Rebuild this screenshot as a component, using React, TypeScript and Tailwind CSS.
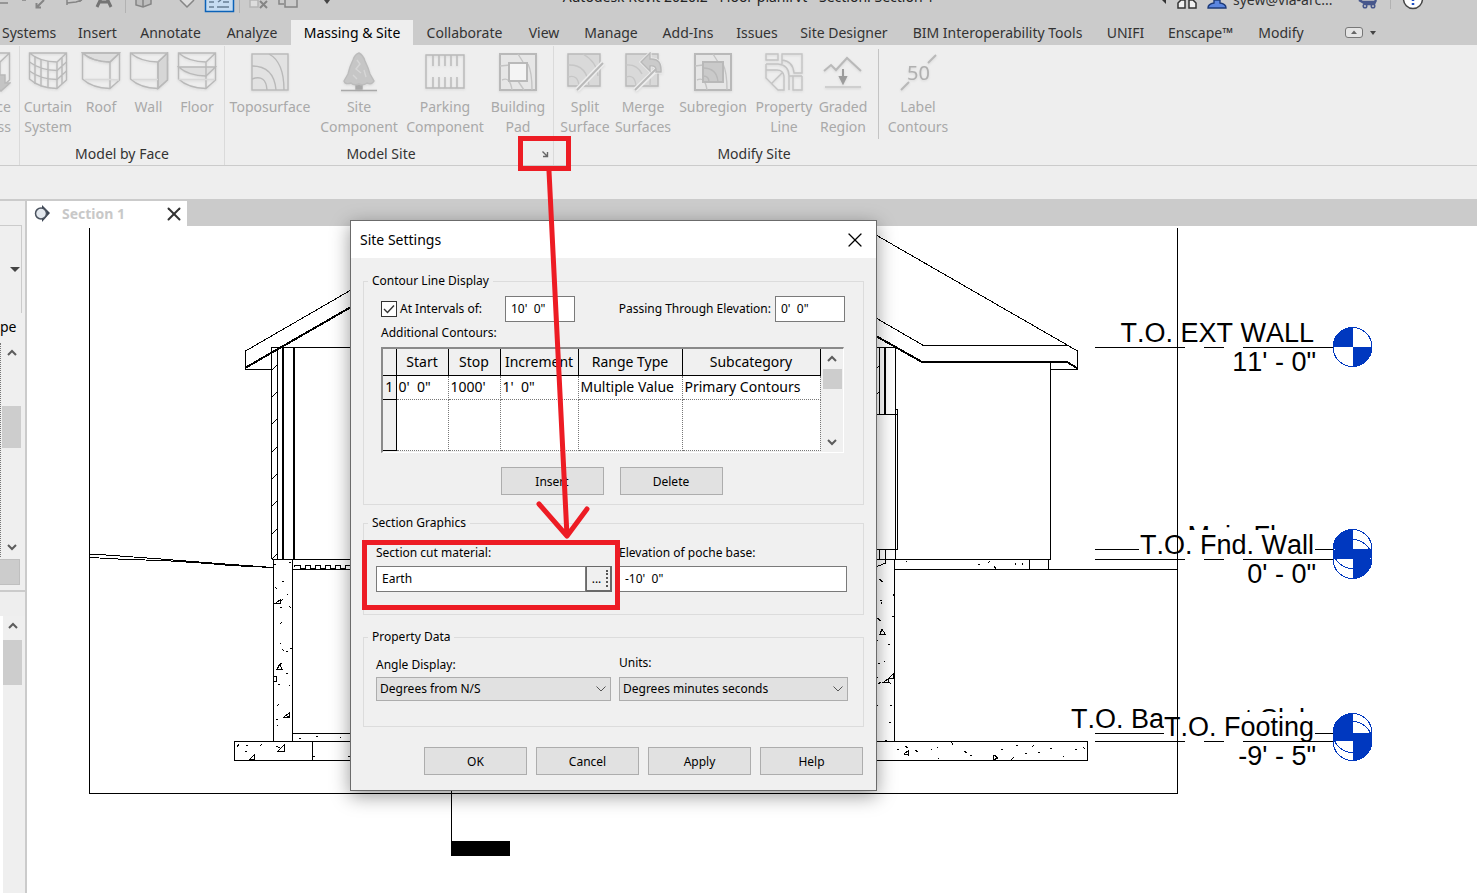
import type { ReactNode } from "react"
import { X } from "lucide-react"

const tabs = [
  { label: "Insert", width: "w-[61px]" },
  { label: "Annotate", width: "w-[85px]" },
  { label: "Analyze", width: "w-[78px]" },
  { label: "Massing & Site", width: "w-[122px]", active: true },
  { label: "Collaborate", width: "w-[103px]" },
  { label: "View", width: "w-[56px]" },
  { label: "Manage", width: "w-[78px]" },
  { label: "Add-Ins", width: "w-[76px]" },
  { label: "Issues", width: "w-[62px]" },
  { label: "Site Designer", width: "w-[112px]" },
  { label: "BIM Interoperability Tools", width: "w-[195px]" },
  { label: "UNIFI", width: "w-[61px]" },
  { label: "Enscape™", width: "w-[89px]" },
  { label: "Modify", width: "w-[72px]" },
]

/* ---------- ribbon icons ---------- */

function Icon({ children }: { children: ReactNode }) {
  return (
    <svg width="40" height="40" viewBox="0 0 40 40" fill="none" stroke="#b9b9b9" strokeWidth="1.4" className="shrink-0 drop-shadow-[0_1px_1px_#d8d8d8]">
      {children}
    </svg>
  )
}

const boxOutline = "M1.5 1H38.500V28L29 36.500Q11 36 1.500 27ZM1.500 1Q12 10 29 10L38.500 1M29 10V36.500"

const CurtainIcon = () => (
  <Icon>
    <path d={boxOutline} />
    <path d="M7 4V32M13 7V34.500M20 9V36M1.500 10Q12 18 29 18.500L38.500 10M1.500 19Q12 27 29 27.500L38.500 19M34 6V32" />
  </Icon>
)
const RoofIcon = () => (
  <Icon>
    <path d="M1.500 1H38.500L29 10Q12 10 1.500 1Z" fill="#dedede" />
    <path d={boxOutline} />
    <path d="M4 27.500H29L38 28" stroke="#d8d8d8" />
  </Icon>
)
const WallIcon = () => (
  <Icon>
    <path d="M29 10L38.500 1V28L29 36.500Z" fill="#d6d6d6" />
    <path d={boxOutline} />
    <path d="M4 27.500H29" stroke="#d8d8d8" />
  </Icon>
)
const FloorIcon = () => (
  <Icon>
    <path d="M1.500 15H38.500L29 24Q12 24 1.500 15Z" fill="#dedede" />
    <path d={boxOutline} />
    <path d="M1.500 27.500H38" stroke="#d8d8d8" />
  </Icon>
)
const MassIcon = () => (
  <Icon>
    <path d={boxOutline} />
    <path d="M26 23H34V31H39L30 39L21 31H26Z" fill="#c4c4c4" />
  </Icon>
)
const TopoIcon = () => (
  <Icon>
    <rect x="2" y="2" width="36" height="36" fill="#e2e2e2" />
    <path d="M19 2Q34 10 34 38M2 14Q24 14 26 38M2 27Q16 22 17 38" />
  </Icon>
)
const TreeIcon = () => (
  <Icon>
    <path d="M17 31H23V37H17Z" fill="#a9a9a9" stroke="#a9a9a9" />
    <path d="M2 38.500H38" stroke="#a9a9a9" />
    <path d="M20 1Q24 3 26 9L29 16L31 22L35 29Q33 33 28 31Q24 34 20 32Q15 34 12 31Q6 33 5 29L9 22L11 15L14 8Q16 2 20 1Z" fill="#c6c6c6" stroke="#bcbcbc" />
    <path d="M18 8L21 12L17 17L22 21M14 23L18 27M25 18L27 25" stroke="#d6d6d6" />
  </Icon>
)
const ParkingIcon = () => (
  <Icon>
    <path d="M1 3H39V36H1Z" />
    <path d="M8 3V14M14 3V14M20 3V14M26 3V14M32 3V14M8 36V25M14 36V25M20 36V25M26 36V25M32 36V25" />
  </Icon>
)
const PadIcon = () => (
  <Icon>
    <rect x="2" y="2" width="36" height="36" fill="#e6e6e6" strokeWidth="2" />
    <path d="M20 2L25 10M2 14L12 13M30 12Q34 20 34 38M4 28Q12 24 14 38M20 29L26 38" stroke="#c4c4c4" />
    <rect x="11" y="11" width="18" height="18" fill="#f4f4f4" strokeWidth="2" />
  </Icon>
)
const SplitIcon = () => (
  <Icon>
    <path d="M3 2H35V34H3Z" fill="#d9d9d9" />
    <path d="M18 2Q32 10 33 24M3 13Q22 12 24 34M3 25Q13 22 14 34" stroke="#c6c6c6" />
    <path d="M12 38L38 11" stroke="#eeeeee" strokeWidth="5" />
    <path d="M12 38L38 11" strokeWidth="2" />
  </Icon>
)
const MergeIcon = () => (
  <Icon>
    <path d="M3 2H35V34H3Z" fill="#d9d9d9" />
    <path d="M3 13Q14 12 19 22M3 25Q12 22 13 34M26 22Q28 28 27 34" stroke="#c6c6c6" />
    <path d="M12 38L36 15" stroke="#eeeeee" strokeWidth="5" />
    <path d="M18 10L27 1V7Q39 6 38 20H33Q34 13 27 14V19Z" fill="#cbcbcb" stroke="#eeeeee" strokeWidth="3" />
    <path d="M12 38L33 17" strokeWidth="2" />
    <path d="M18 10L27 1V7Q39 6 38 20H33Q34 13 27 14V19Z" fill="#cbcbcb" />
  </Icon>
)
const SubregionIcon = () => (
  <Icon>
    <rect x="2" y="2" width="36" height="36" fill="#e6e6e6" strokeWidth="2" />
    <path d="M20 2L25 10M2 14L10 13M30 12Q34 20 34 38M4 28Q12 24 14 38" stroke="#c4c4c4" />
    <rect x="10" y="10" width="20" height="20" fill="#cacaca" strokeWidth="2" />
    <path d="M10 16Q24 16 25 30M10 24Q16 24 16 30" />
  </Icon>
)
const PropertyIcon = () => (
  <Icon>
    <path d="M2 8V2H14V8ZM18 2H38V21H30Q29 9 18 8ZM2 12H14Q25 13 25 24V38M18 8V12M25 24H38M29 24V38H38V24M2 12V26L14 38H20V24Q19 18 13 18H2M8 31L19 20" stroke="#c4c4c4" />
  </Icon>
)
const GradedIcon = () => (
  <Icon>
    <path d="M1 19L8 13L13 18L24 6L38 19" strokeWidth="2" />
    <path d="M20 17V26M17 25L20 31L23 25Z" stroke="#9c9c9c" fill="#9c9c9c" strokeWidth="2" />
    <path d="M2 35H38" stroke="#cfcfcf" strokeWidth="2" />
  </Icon>
)
const LabelIcon = () => (
  <Icon>
    <path d="M30 11L38 3M3 38L11 30" strokeWidth="2" />
    <text x="9" y="28" fontSize="20" fill="#b0b0b0" stroke="none" fontFamily="Noto Sans, sans-serif">50</text>
  </Icon>
)

type Tool = { lines: string[]; width: string; icon: ReactNode }

const faceTools: Tool[] = [
  { lines: ["Curtain", "System"], width: "w-[56px]", icon: <CurtainIcon /> },
  { lines: ["Roof"], width: "w-[50px]", icon: <RoofIcon /> },
  { lines: ["Wall"], width: "w-[45px]", icon: <WallIcon /> },
  { lines: ["Floor"], width: "w-[52px]", icon: <FloorIcon /> },
]
const siteTools: Tool[] = [
  { lines: ["Toposurface"], width: "w-[90px]", icon: <TopoIcon /> },
  { lines: ["Site", "Component"], width: "w-[88px]", icon: <TreeIcon /> },
  { lines: ["Parking", "Component"], width: "w-[84px]", icon: <ParkingIcon /> },
  { lines: ["Building", "Pad"], width: "w-[62px]", icon: <PadIcon /> },
]
const modifyTools: Tool[] = [
  { lines: ["Split", "Surface"], width: "w-[62px]", icon: <SplitIcon /> },
  { lines: ["Merge", "Surfaces"], width: "w-[54px]", icon: <MergeIcon /> },
  { lines: ["Subregion"], width: "w-[86px]", icon: <SubregionIcon /> },
  { lines: ["Property", "Line"], width: "w-[56px]", icon: <PropertyIcon /> },
  { lines: ["Graded", "Region"], width: "w-[62px]", icon: <GradedIcon /> },
]

function ToolButton({ tool }: { tool: Tool }) {
  return (
    <button type="button" className={`flex flex-col items-center text-[#a9a9a9] ${tool.width}`}>
      {tool.icon}
      <span className="mt-[5px] flex flex-col items-center whitespace-nowrap leading-5">
        {tool.lines.map((line) => (
          <span key={line}>{line}</span>
        ))}
      </span>
    </button>
  )
}

function RibbonPanel({ title, tools, children, launcher }: { title: string; tools: Tool[]; children?: ReactNode; launcher?: boolean }) {
  return (
    <section className="flex flex-col">
      <div className="flex h-[97px] items-start pt-[6px]">
        {tools.map((tool) => (
          <ToolButton key={tool.lines.join()} tool={tool} />
        ))}
        {children}
      </div>
      <div className="flex h-[22px] items-center">
        <h2 className="flex-1 text-center text-[#333]">{title}</h2>
        {launcher && (
          <button type="button" aria-label="Site settings" className="flex w-4 justify-center">
            <svg width="8" height="8" viewBox="0 0 8 8" fill="none" stroke="#666" strokeWidth="1.4">
              <path d="M1.500 1.500L6 6M6.500 2V6.500H2" />
            </svg>
          </button>
        )}
      </div>
    </section>
  )
}

/* ---------- window chrome ---------- */

function TitleBar() {
  return (
    <header className="flex h-5 items-start justify-between overflow-hidden">
      <div className="flex w-[340px] items-start">
        <svg width="340" height="20" viewBox="0 0 340 20" fill="none" stroke="#858585" strokeWidth="1.5">
          <path d="M0 3H8M22 0H26" />
          <path d="M37 7L44 0M36.500 3V7.500H41" strokeWidth="2" />
          <path d="M67 0V5M67 3L76 2L82 0M80 0V2" />
          <path d="M97 7L104 -8L111 7M100 2H108" stroke="#747474" strokeWidth="3" />
          <path d="M125.500 0V13M239.500 0V13" stroke="#b2b2b2" strokeWidth="1" />
          <path d="M136 0V5L143 7L151 4V0M143 0V7" fill="#bdbdbd" />
          <path d="M180 0L187 7L194 0" fill="#dddddd" />
          <path d="M205.500 -2H233.500V11.500H205.500Z" fill="#c5dcf2" stroke="#0b62b8" />
          <path d="M209 2H214M209 7H214M217 7H229M218 2L221 0M223 2H229" stroke="#667d94" />
          <path d="M250 0V7H258V0Z" fill="#dddddd" stroke="#b5b5b5" />
          <path d="M260 1L267 8M267 1L260 8" strokeWidth="2" />
          <path d="M279 0V4H284M285 -2H297V7H285Z" />
          <path d="M324 0H330L327 4Z" fill="#444" stroke="none" />
        </svg>
      </div>
      <div className="-mt-[13px] whitespace-nowrap text-sm leading-5 text-[#222]">Autodesk Revit 2020.2 - Floor plan.rvt - Section: Section 1</div>
      <div className="flex w-[320px] items-start">
        <svg width="76" height="14" viewBox="0 0 76 14" fill="none">
          <path d="M5 0L9 4V0Z" fill="#333" />
          <path d="M21 8V3L24 0H28V8ZM32 0V8H39V3L36 0Z" fill="#f0f0f0" stroke="#333" strokeWidth="1.5" />
          <path d="M51 8Q51 4 57 3V0H63V3Q69 4 69 8Z" fill="#5b86e0" stroke="#1d3b7a" strokeWidth="1.4" />
        </svg>
        <span className="-mt-[10px] w-[123px] whitespace-nowrap text-sm leading-5 text-[#333]">syew@via-arc...</span>
        <svg width="90" height="14" viewBox="0 0 90 14" fill="none">
          <path d="M3 0L10 4H18L20 0M7 2H19" stroke="#47578c" strokeWidth="2.500" />
          <circle cx="9" cy="6" r="1.800" stroke="#47578c" strokeWidth="1.5" />
          <circle cx="17" cy="6" r="1.800" stroke="#47578c" strokeWidth="1.5" />
          <path d="M34.500 0V9" stroke="#b2b2b2" />
          <circle cx="57" cy="-1" r="9.500" fill="#fff" stroke="#444" strokeWidth="1.5" />
          <path d="M57 -3V1M57 3V5" stroke="#1d4fc4" strokeWidth="2.500" />
        </svg>
      </div>
    </header>
  )
}

function ScrollArrow({ up }: { up?: boolean }) {
  return (
    <button type="button" aria-label={up ? "Scroll up" : "Scroll down"} className="flex h-5 w-full items-center justify-center">
      <svg width="10" height="8" viewBox="0 0 10 8" fill="none" stroke="#5c5c5c" strokeWidth="2">
        <path d={up ? "M1 6L5 2L9 6" : "M1 2L5 6L9 2"} />
      </svg>
    </button>
  )
}

function SidePanel() {
  return (
    <aside className="flex w-[27px] shrink-0 flex-col border-r-2 border-[#cbcbcb] bg-[#efefef] pt-6">
      <div className="mr-[3px] flex h-[88px] items-center justify-end border-t border-r border-[#cbcbcb]">
        <svg width="11" height="6" viewBox="0 0 11 6">
          <path d="M0 0H10L5 5Z" fill="#444" />
        </svg>
      </div>
      <p className="h-[30px] overflow-hidden leading-7 text-black">pe</p>
      <div className="mr-1 flex h-[214px] flex-col border-l border-dotted border-[#777] pl-[1px]">
        <ScrollArrow up />
        <div className="mt-[43px] h-[42px] bg-[#cdcdcd]" />
        <div className="flex-1" />
        <ScrollArrow />
      </div>
      <button type="button" aria-label="Apply" className="mt-[2px] mr-[5px] h-[26px] border border-l-0 border-[#bfbfbf] bg-[#cccccc]" />
      <div className="mt-[5px] h-[26px] border-t-2 border-[#cbcbcb] bg-[#eeeeee]" />
      <div className="mr-[3px] flex flex-1 flex-col border-l-[3px] border-white">
        <ScrollArrow up />
        <div className="mt-1 h-[45px] bg-[#cdcdcd]" />
      </div>
    </aside>
  )
}

/* ---------- section view ---------- */

const sidingMarks = [367, 394, 421, 449, 476, 503, 531, 556]

function LevelHead({ y }: { y: number }) {
  return (
    <g transform={`translate(1352.500 ${y})`} shapeRendering="crispEdges">
      <circle r="19.500" fill="none" stroke="#0038bf" />
      <path d="M0 0H-19.500A19.500 19.500 0 0 1 0 -19.500ZM0 0H19.500A19.500 19.500 0 0 1 0 19.500Z" fill="#0038bf" stroke="none" />
    </g>
  )
}

function SectionDrawing() {
  return (
    <svg width="1450" height="667" viewBox="27 226 1450 667" className="block shrink-0" fill="none" stroke="#000">
      <g shapeRendering="crispEdges">
        {/* left half */}
        <path d="M351 290L245.500 351V369.500H271M271.500 559V347.500H351M277.500 347V559" />
        <path d="M245 368L351 307M283 347V559M294 347V559" strokeWidth="2" />
        {sidingMarks.map((y) => (
          <path key={y} d={`M272 ${y + 3}L277 ${y - 2}`} />
        ))}
        <path d="M272 559.500H351M273.500 559V741M292.500 559V741M292 569.500H351M292 733.500H351" />
        <path d="M294 567V565H300V568H305V565H310V568H315V565H320V568H325V565H330V568H335V565H340V568H345V565H351" />
        <path d="M90 554.500H99L154 558.500L167 559.500L205 562.500L273 567.500M90 557.500L127 559.500L163 560.500L208 563.500L230 565.500L273 567.500" />
        <path d="M351 760.500H234.500V741.500H351M312.500 741V760" />

        {/* right half */}
        <path d="M876 235L1068 345.500L1077.500 351V369.500H1051M876 318L923.500 345.500H1068M876 347.500H895.500V414M879.500 347V414" />
        <path d="M876 336L922 362H1067L1077 368" strokeWidth="2" />
        <path d="M885 347V414" strokeWidth="2" />
        <path d="M876 414.500H897M895.500 409.500H897.500V549.500H876M895.500 414V559M1050.500 363V559.500H876M879.500 549V559M885.500 549V563L876 567" />
        <path d="M877 368L880 365M877 394L880 391M894.500 559V741M894 569.500H1177M1029.500 559V569M1048.500 559V569M876 741.500H1087.500V760.500H876" />

        {/* concrete specks */}
        <path d="M274 564L276 565M289 562H291M282 581H284M275 587L277 589M287 594V595M281 601L283 599M280 608L282 607M289 606L291 608M280 624L282 622M280 643V644M282 649L284 651M286 651H288M290 648H292M278 666L282 663M286 673H288M278 684H280M289 685V686M277 706L279 704M276 719H278M289 716L286 718M277 725V726M299 738H301M316 736H318M340 737H341" />
        <path d="M276 603H280V600ZM277 669H282L280 665ZM284 717H289V713ZM274 676H276V681H274M278 751H284V745ZM250 759H254V755Z" />
        <path d="M237 747L239 744M246 745H248M245 751H247M260 746L262 744M276 746L280 748M313 756H315M348 756H351" />
        <path d="M906 561H907M978 565L980 564M988 563L990 561M994 566L996 569M1015 563V565M1022 563V565M879 579L883 582M880 600H882M881 602V604M877 618L881 621M893 594V596M892 616H894M876 640H878M888 644H890M878 664L880 663M884 661H885M876 676L878 678M878 684L881 682M889 682L891 684M876 705H878M890 705H892M889 722H891M885 740H887" />
        <path d="M880 634H885L882 629ZM884 682H888V679ZM889 678H893V674ZM904 754L908 751V755ZM993 760L998 758L994 755Z" />
        <path d="M897 749H899M905 746L908 748M915 750L918 752M931 749H932M937 747V748M951 741L953 745M964 751L967 753M970 755L972 756M938 758H939M995 755L996 757M1001 749H1003M1011 760L1014 757M1016 745H1018M1025 754L1027 753M1032 747L1034 745M1038 752H1040M1050 748H1052M1063 756H1064M1075 749H1077M1083 747L1085 749" />
      </g>

      {/* levels */}
      <g fill="#000" stroke="none" fontSize="27" textAnchor="end" fontFamily="Liberation Sans, Arial, sans-serif" className="[font-kerning:none]">
        <text x="1314" y="342">T.O. EXT WALL</text>
        <text x="1316" y="371">11' - 0"</text>
        <text x="1315" y="545">Main Floor</text>
        <path d="M1139 530H1315V556H1139Z" fill="#fff" />
        <text x="1314" y="554">T.O. Fnd. Wall</text>
        <text x="1316" y="583">0' - 0"</text>
        <text x="1314" y="728">T.O. Basement Slab</text>
        <path d="M1164 712H1315V740H1164Z" fill="#fff" />
        <text x="1314" y="736">T.O. Footing</text>
        <text x="1316" y="765">-9' - 5"</text>
      </g>
      <g shapeRendering="crispEdges">
        <path d="M1095 347.500H1185M1204 347.500H1224M1243 347.500H1333" />
        <path d="M1095 549.500H1139M1315 549.500H1333M1095 559.500H1185M1204 559.500H1224M1243 559.500H1333" />
        <path d="M1095 733.500H1164M1315 733.500H1333M1095 741.500H1185M1204 741.500H1224M1243 741.500H1333" />
        <path d="M89.500 228V793.500H1177.500V228M451.500 791V841" />
        <path d="M451 841H510V856H451Z" fill="#000" stroke="none" />
      </g>
      {[347, 549, 559, 733, 741].map((y) => (
        <LevelHead key={y} y={y} />
      ))}
    </svg>
  )
}

/* ---------- dialog ---------- */

const columns = [
  { label: "Start", width: "w-[52px]", value: "0'  0\"" },
  { label: "Stop", width: "w-[52px]", value: "1000'" },
  { label: "Increment", width: "w-[78px]", value: "1'  0\"" },
  { label: "Range Type", width: "w-[104px]", value: "Multiple Value" },
  { label: "Subcategory", width: "w-[138px]", value: "Primary Contours" },
]

const field = "h-[26px] border border-[#7a7a7a] bg-white px-[5px] pb-[2px] outline-none"

function PushButton({ children }: { children: ReactNode }) {
  return (
    <button type="button" className="h-7 w-[103px] border border-[#adadad] bg-[#e1e1e1] pt-[1px]">
      {children}
    </button>
  )
}

function Dropdown({ id, value, width }: { id: string; value: string; width: string }) {
  return (
    <div className={`relative ${width}`}>
      <select id={id} defaultValue={value} className="block h-6 w-full appearance-none border border-[#adadad] bg-[#e1e1e1] pl-[3px] outline-none">
        <option>{value}</option>
      </select>
      <svg width="10" height="6" viewBox="0 0 10 6" fill="none" stroke="#555" className="pointer-events-none absolute top-[9px] right-[5px]">
        <path d="M0.500 0.500L5 5L9.500 0.500" />
      </svg>
    </div>
  )
}

function ContoursTable() {
  return (
    <div className="mt-[5px] flex h-[106px] w-[463px] border-t-2 border-l-2 border-[#8a8a8a] border-r border-b border-r-white border-b-white bg-[#f0f0f0]">
      <table className="h-[102px] table-fixed border-collapse text-sm">
        <thead>
          <tr className="h-[26px]">
            <th className="w-[13px] border-r border-b border-black p-0" />
            {columns.map((col) => (
              <th key={col.label} className={`border-r border-b border-black p-0 text-center font-normal whitespace-nowrap ${col.width}`}>
                {col.label}
              </th>
            ))}
          </tr>
        </thead>
        <tbody className="bg-white">
          <tr className="h-6">
            <td className="border-r border-b border-black bg-[#f0f0f0] p-0 text-center">1</td>
            {columns.map((col) => (
              <td key={col.label} className="border-r border-b border-dotted border-[#777] p-0 pl-[2px] whitespace-pre">
                {col.value}
              </td>
            ))}
          </tr>
          <tr>
            <td className="border-r border-b border-black bg-[#f0f0f0] p-0" />
            {columns.map((col) => (
              <td key={col.label} className="border-r border-b border-dotted border-[#777] p-0" />
            ))}
          </tr>
        </tbody>
      </table>
      <div className="ml-[2px] flex w-[19px] flex-col">
        <ScrollArrow up />
        <div className="h-5 bg-[#cdcdcd]" />
        <div className="flex-1" />
        <ScrollArrow />
      </div>
    </div>
  )
}

function SiteSettings() {
  return (
    <div
      role="dialog"
      aria-labelledby="dialog-title"
      className="absolute top-[220px] left-[350px] w-[527px] border border-[#6b6b6b] bg-[#f0f0f0] text-xs text-black shadow-[0_5px_18px_rgba(0,0,0,0.4)]"
    >
      <div className="flex h-[37px] items-center justify-between bg-white px-[9px]">
        <h1 id="dialog-title" className="text-sm">Site Settings</h1>
        <button type="button" aria-label="Close">
          <X size={24} strokeWidth={1.2} />
        </button>
      </div>

      <form className="flex flex-col px-3 pt-[14px] pb-[15px]">
        <fieldset className="h-[233px] border border-[#dcdcdc] pr-[18px] pl-[17px]">
          <legend className="-ml-[13px] px-1 leading-[18px]">Contour Line Display</legend>
          <div className="mt-[6px] flex items-center">
            <label className="flex w-[124px] items-center gap-[3px]">
              <span className="relative h-4 w-4">
                <input type="checkbox" defaultChecked className="peer block h-4 w-4 appearance-none border border-[#333] bg-white" />
                <svg width="16" height="16" viewBox="0 0 16 16" fill="none" stroke="#333" strokeWidth="1.4" className="pointer-events-none absolute inset-0 opacity-0 peer-checked:opacity-100">
                  <path d="M3 8L6.500 11.500L13 4.500" />
                </svg>
              </span>
              At Intervals of:
            </label>
            <input aria-label="Interval" defaultValue={"10'  0\""} className={`w-[70px] ${field}`} />
            <label htmlFor="elevation" className="ml-auto whitespace-nowrap">Passing Through Elevation:</label>
            <input id="elevation" defaultValue={"0'  0\""} className={`ml-1 w-[70px] ${field}`} />
          </div>
          <p className="mt-[2px] leading-[18px]">Additional Contours:</p>
          <ContoursTable />
          <div className="mt-[14px] flex justify-center gap-4 pr-[3px]">
            <PushButton>Insert</PushButton>
            <PushButton>Delete</PushButton>
          </div>
        </fieldset>

        <fieldset className="mt-[9px] h-[101px] border border-[#dcdcdc] px-3">
          <legend className="-ml-2 px-1 leading-[18px]">Section Graphics</legend>
          <div className="mt-3 flex gap-[7px]">
            <div className="flex w-[236px] flex-col gap-1">
              <label htmlFor="material" className="leading-[18px]">Section cut material:</label>
              <div className="flex">
                <input id="material" defaultValue="Earth" className={`w-[210px] ${field}`} />
                <button type="button" aria-label="Browse materials" className="flex h-[26px] w-[26px] border border-r-2 border-b-2 border-[#696969] bg-[#f0f0f0] py-[3px] pr-[2px]">
                  <span className="flex h-full flex-1 items-center justify-center border-r-2 border-dotted border-[#555]">...</span>
                </button>
              </div>
            </div>
            <div className="flex w-[228px] flex-col gap-1">
              <label htmlFor="poche" className="leading-[18px]">Elevation of poche base:</label>
              <input id="poche" defaultValue={"-10'  0\""} className={field} />
            </div>
          </div>
        </fieldset>

        <fieldset className="mt-[13px] h-[99px] border border-[#dcdcdc] px-3">
          <legend className="-ml-2 px-1 leading-[18px]">Property Data</legend>
          <div className="mt-2 flex items-end gap-2">
            <div className="flex flex-col gap-[3px]">
              <label htmlFor="angle" className="leading-[18px]">Angle Display:</label>
              <Dropdown id="angle" value="Degrees from N/S" width="w-[235px]" />
            </div>
            <div className="flex flex-col gap-[5px]">
              <label htmlFor="units" className="leading-[18px]">Units:</label>
              <Dropdown id="units" value="Degrees minutes seconds" width="w-[229px]" />
            </div>
          </div>
        </fieldset>

        <div className="mt-5 flex justify-end gap-[9px] pr-[1px]">
          <PushButton>OK</PushButton>
          <PushButton>Cancel</PushButton>
          <PushButton>Apply</PushButton>
          <PushButton>Help</PushButton>
        </div>
      </form>
    </div>
  )
}

function Markup() {
  return (
    <svg width="700" height="640" viewBox="0 0 700 640" className="pointer-events-none absolute top-0 left-0" fill="none" stroke="#ed1c24" strokeWidth="5">
      <path d="M520.500 138.500H568.500V168.500H520.500ZM364.500 542.500H617.500V607.500H364.500Z" />
      <path d="M549 171L567 536M539 504L567 536L587 509" strokeLinecap="round" strokeLinejoin="round" />
    </svg>
  )
}

export default function App() {
  return (
    <div className="relative flex h-screen flex-col overflow-hidden bg-[#cbcbcb] font-['Noto_Sans',sans-serif] text-sm">
      <TitleBar />

      <nav className="flex h-[25px] shrink-0 text-[#333]">
        <a href="#" className="flex w-[67px] items-center pl-[2px]">Systems</a>
        {tabs.map((tab) => (
          <a
            key={tab.label}
            href="#"
            className={`flex shrink-0 items-center justify-center whitespace-nowrap ${tab.width} ${tab.active ? "bg-[#eeeeee] text-black" : ""}`}
          >
            {tab.label}
          </a>
        ))}
        <button type="button" aria-label="Ribbon display" className="ml-7 flex items-center gap-[7px]">
          <svg width="18" height="11" viewBox="0 0 18 11">
            <rect x="0.500" y="0.500" width="17" height="10" rx="2.500" fill="#e4e4e4" stroke="#777" />
            <path d="M6 7H12L9 3.500Z" fill="#666" />
          </svg>
          <svg width="6" height="4" viewBox="0 0 6 4">
            <path d="M0 0H6L3 4Z" fill="#444" />
          </svg>
        </button>
      </nav>

      <div className="flex h-[121px] shrink-0 border-b border-[#cbcbcb] bg-[#eeeeee] pt-[1px]">
        <div className="flex w-5 justify-end overflow-hidden border-r border-[#dadada] pr-2">
          <div className="flex flex-col items-end pt-[6px] text-[#a9a9a9]">
            <MassIcon />
            <span className="mt-[5px] leading-5">Place</span>
            <span className="leading-5">Mass</span>
          </div>
        </div>
        <div className="w-[205px] border-r border-[#dadada]">
          <RibbonPanel title="Model by Face" tools={faceTools} />
        </div>
        <div className="w-[329px] border-r border-[#dadada]">
          <RibbonPanel title="Model Site" tools={siteTools} launcher />
        </div>
        <div className="w-[400px]">
          <RibbonPanel title="Modify Site" tools={modifyTools}>
            <div className="mx-1 -mt-[3px] h-[90px] w-px bg-[#c4c4c4]" />
            <ToolButton tool={{ lines: ["Label", "Contours"], width: "w-[70px]", icon: <LabelIcon /> }} />
          </RibbonPanel>
        </div>
      </div>

      <div className="h-[33px] shrink-0 bg-[#eeeeee]" />

      <div className="mt-[2px] flex min-h-0 flex-1">
        <SidePanel />
        <main className="flex min-w-0 flex-1 flex-col">
          <div className="flex h-[25px] shrink-0">
            <div className="flex w-40 items-center bg-white pr-[2px] pl-[7px]">
              <svg width="17" height="17" viewBox="0 0 17 17">
                <path d="M8 0L16 8L8 17Z" fill="#3c4654" />
                <circle cx="7" cy="8.500" r="5.500" fill="#e3e8ee" stroke="#4a525e" strokeWidth="1.5" />
              </svg>
              <span className="ml-[11px] flex-1 text-sm font-bold text-[#c8c8c8]">Section 1</span>
              <button type="button" aria-label="Close view">
                <X size={22} strokeWidth={2.2} color="#333" />
              </button>
            </div>
          </div>
          <div className="min-h-0 flex-1 overflow-hidden bg-white">
            <SectionDrawing />
          </div>
        </main>
      </div>

      <SiteSettings />
      <Markup />
    </div>
  )
}
